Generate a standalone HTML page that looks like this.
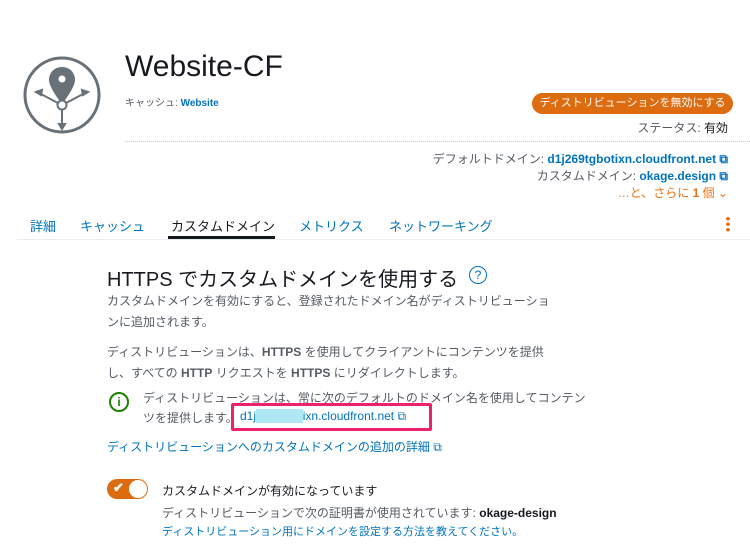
<!DOCTYPE html>
<html><head><meta charset="utf-8"><style>
body{margin:0;width:750px;height:559px;background:#fff;font-family:"Liberation Sans","Noto Sans CJK JP",sans-serif;color:#16191f;position:relative;overflow:hidden}
.a{position:absolute;white-space:nowrap}
.lk{color:#0073bb}
.g{color:#545b64}
.b{font-weight:bold}
</style></head><body>
<svg class="a" style="left:22px;top:55px" width="80" height="80" viewBox="0 0 80 80">
<circle cx="40" cy="40" r="37" fill="none" stroke="#687078" stroke-width="3"/>
<path d="M40 12c-8 0-13 6-13 13 0 8 13 24 13 24s13-16 13-24c0-7-5-13-13-13z" fill="#687078"/>
<circle cx="40" cy="24" r="3.5" fill="#fff"/>
<circle cx="40" cy="50" r="4.5" fill="#fff" stroke="#687078" stroke-width="2"/>
<g stroke="#687078" stroke-width="2" fill="#687078">
<line x1="36" y1="48" x2="17" y2="38"/><line x1="44" y1="48" x2="63" y2="38"/><line x1="40" y1="55" x2="40" y2="71"/>
<path d="M14 37l6-2-1 5z"/><path d="M66 37l-6-2 1 5z"/><path d="M40 74l-3-5h6z"/>
</g></svg>
<div class="a" style="left:125px;top:50px;font-size:30px;color:#16191f">Website-CF</div>
<div class="a g" style="left:125px;top:94px;font-size:10px">キャッシュ: <span class="lk b">Website</span></div>
<div class="a" style="left:125px;top:141px;width:625px;border-top:1px dotted #ccc"></div>
<div class="a" style="left:532px;top:93px;width:201px;height:21px;border-radius:11px;background:#dd6b10;color:#fff;font-size:11px;line-height:21px;text-align:center">ディストリビューションを無効にする</div>
<div class="a g" style="right:22px;top:119px;font-size:12px">ステータス: <span style="color:#16191f">有効</span></div>
<div class="a g" style="right:22px;top:150px;font-size:12px">デフォルトドメイン: <span class="lk b">d1j269tgbotixn.cloudfront.net ⧉</span></div>
<div class="a g" style="right:22px;top:167px;font-size:12px">カスタムドメイン: <span class="lk b">okage.design ⧉</span></div>
<div class="a" style="right:22px;top:184px;font-size:12px;color:#ec7211">…と、さらに <b>1</b> 個 ⌄</div>
<div class="a" style="left:17px;top:239px;width:733px;border-top:1px solid #eaeded"></div>
<div class="a lk" style="left:30px;top:216px;font-size:13px">詳細</div>
<div class="a lk" style="left:80px;top:216px;font-size:13px">キャッシュ</div>
<div class="a" style="left:171px;top:216px;font-size:13px;color:#16191f">カスタムドメイン</div>
<div class="a" style="left:168px;top:236px;width:107px;height:3px;background:#16191f"></div>
<div class="a lk" style="left:299px;top:216px;font-size:13px">メトリクス</div>
<div class="a lk" style="left:389px;top:216px;font-size:13px">ネットワーキング</div>
<div class="a" style="left:726px;top:216px;width:4px;height:16px;background:radial-gradient(circle,#ec7211 1.8px,transparent 2px) 0 0/4px 5.5px"></div>
<div class="a" style="left:107px;top:263px;font-size:20px">HTTPS でカスタムドメインを使用する</div>
<div class="a lk" style="left:469px;top:266px;width:16px;height:16px;border:1.5px solid #0073bb;border-radius:50%;font-size:12px;line-height:16px;text-align:center">?</div>
<div class="a g" style="left:107px;top:291px;font-size:12px;line-height:20.5px">カスタムドメインを有効にすると、登録されたドメイン名がディストリビューショ<br>ンに追加されます。</div>
<div class="a g" style="left:107px;top:342px;font-size:12px;line-height:20.5px">ディストリビューションは、<b>HTTPS</b> を使用してクライアントにコンテンツを提供<br>し、すべての <b>HTTP</b> リクエストを <b>HTTPS</b> にリダイレクトします。</div>
<div class="a" style="left:109px;top:392px;width:16px;height:16px;border:2px solid #1d8102;border-radius:50%;color:#1d8102;font-size:12px;font-weight:bold;line-height:16px;text-align:center">i</div>
<div class="a g" style="left:143px;top:388px;font-size:12px;line-height:20px">ディストリビューションは、常に次のデフォルトのドメイン名を使用してコンテン<br>ツを提供します。</div>
<div class="a" style="left:231px;top:403px;width:195px;height:22px;border:3px solid #f0206a;border-radius:2px"></div>
<div class="a lk" style="left:240px;top:409px;font-size:12px">d1j<span style="background:#aee8f5;color:#aee8f5">269tgbot</span>ixn.cloudfront.net ⧉</div>
<div class="a lk" style="left:107px;top:438px;font-size:12px">ディストリビューションへのカスタムドメインの追加の詳細 ⧉</div>
<div class="a" style="left:107px;top:479px;width:41px;height:20px;border-radius:11px;background:#dd6b10"></div>
<div class="a" style="left:129px;top:480px;width:18px;height:18px;border-radius:50%;background:#fff"></div>
<div class="a" style="left:113px;top:480px;color:#fff;font-size:13px;font-weight:bold">✔</div>
<div class="a" style="left:162px;top:482px;font-size:12px">カスタムドメインが有効になっています</div>
<div class="a g" style="left:162px;top:504px;font-size:12px">ディストリビューションで次の証明書が使用されています: <b style="color:#16191f">okage-design</b></div>
<div class="a lk" style="left:162px;top:523px;font-size:11px">ディストリビューション用にドメインを設定する方法を教えてください。</div>
</body></html>
